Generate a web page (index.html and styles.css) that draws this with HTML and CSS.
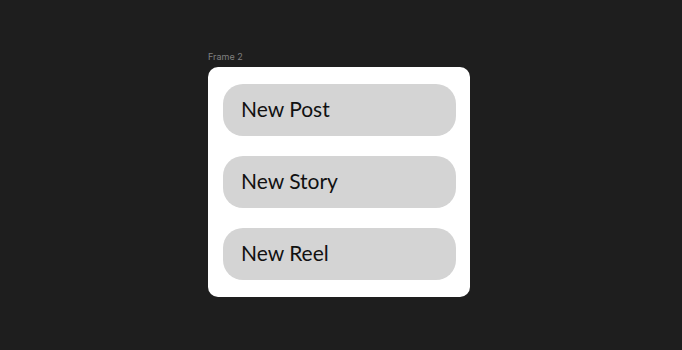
FILE: index.html
```html
<!DOCTYPE html>
<html lang="en">
<head>
<meta charset="UTF-8">
<title>Frame 2</title>
<link rel="stylesheet" href="styles.css">
</head>
<body>

<div class="frame">

<div class="label">Frame 2</div>

<div class="menu">

<div class="item">New Post</div>

<div class="item">New Story</div>

<div class="item">New Reel</div>

</div>

</div>

</body>
</html>
```

FILE: styles.css
```css
body{
margin:0;
background:#1e1e1e;
font-family:Lato, "Liberation Sans", sans-serif;
}

.frame{
width:262px;
margin-left:208px;
padding-top:50px;
}

.label{
font-family:Inter, "Liberation Sans", sans-serif;
font-size:9px;
color:#808080;
height:17px;
line-height:14px;
}

.menu{
background:white;
border-radius:10px;
padding:17px 14px 17px 15px;
display:flex;
flex-direction:column;
gap:20px;
}

.item{
background:#d4d4d4;
border-radius:20px;
height:52px;
line-height:49px;
padding-left:18px;
font-size:21px;
color:#111;
}
```
